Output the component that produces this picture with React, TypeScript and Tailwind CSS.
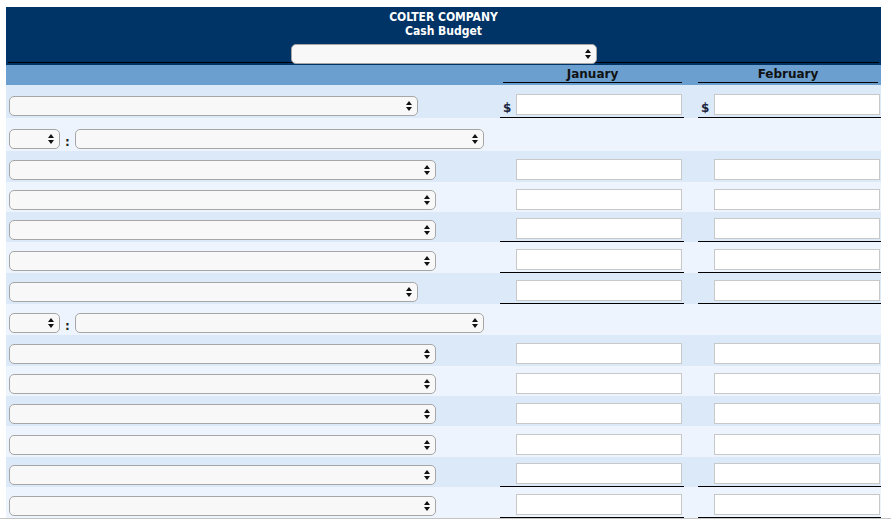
import React from 'react';

type Row = {
  h: number;
  pair?: boolean;
  w?: number;
  input?: boolean;
  dollar?: boolean;
  line?: boolean;
};

const rows: Row[] = [
  { h: 33, w: 409, input: true, dollar: true, line: true },
  { h: 33, pair: true },
  { h: 31, w: 427, input: true },
  { h: 30, w: 427, input: true },
  { h: 30, w: 427, input: true, line: true },
  { h: 31, w: 427, input: true, line: true },
  { h: 31, w: 409, input: true, line: true },
  { h: 31, pair: true },
  { h: 31, w: 427, input: true },
  { h: 30, w: 427, input: true },
  { h: 30, w: 427, input: true },
  { h: 31, w: 427, input: true },
  { h: 30, w: 427, input: true, line: true },
  { h: 31, w: 427, input: true, line: true },
];

function Arrows() {
  return (
    <svg width="6" height="10" viewBox="0 0 6 10" className="pointer-events-none absolute right-[6px] top-1/2 -translate-y-1/2">
      <path d="M0 4 L3 0 L6 4 Z" fill="#111" />
      <path d="M0 6 L3 10 L6 6 Z" fill="#111" />
    </svg>
  );
}

function Select({ width }: { width: number }) {
  return (
    <div className="relative h-[20px] shrink-0" style={{ width }}>
      <select className="block h-full w-full appearance-none rounded-[5px] border border-[#a6a6a6] bg-[#f8f8f8] text-[11px] outline-none">
        <option value=""></option>
      </select>
      <Arrows />
    </div>
  );
}

function Cell({ row, first }: { row: Row; first: boolean }) {
  return (
    <div
      className={`flex h-full items-end pb-[2px] ${row.line ? 'border-b border-black' : ''} ${first ? 'w-[184px]' : 'w-[183px]'}`}
    >
      <div className="flex w-[16px] items-end pl-[3px] text-[12px] font-bold leading-[14px] text-[#1b2540]">
        {row.dollar ? '$' : ''}
      </div>
      {row.input && (
        <input type="text" className="block h-[21px] w-[166px] border border-[#c8c8c8] bg-white outline-none" />
      )}
    </div>
  );
}

export default function App() {
  return (
    <div className="min-h-[523px] bg-white pt-[7px]" style={{ fontFamily: '"DejaVu Sans", Verdana, sans-serif' }}>
      <div className="ml-[6px] w-[875px]">
        <div className="h-[58px] bg-[#003366]">
          <div className="mx-[2px] h-[56px] border-b border-black">
            <div
              className="h-[31px] pt-[3px] text-center text-[12px] font-bold leading-[14px] text-white"
              style={{ fontFamily: '"DejaVu Sans Condensed", "DejaVu Sans", sans-serif' }}
            >
              <div>COLTER COMPANY</div>
              <div>Cash Budget</div>
            </div>
            <div className="relative z-10 mt-[6px] flex h-[20px] justify-center">
              <Select width={306} />
            </div>
          </div>
        </div>

        <div className="flex h-[20px] bg-[#6a9fcf] text-[12px] font-bold text-[#111]">
          <div className="w-[494px]" />
          <div className="ml-[3px] h-[18px] w-[179px] border-b border-black pt-[2px] text-center leading-[15px]">January</div>
          <div className="w-[16px]" />
          <div className="h-[18px] w-[180px] border-b border-black pt-[2px] text-center leading-[15px]">February</div>
        </div>

        {rows.map((row, i) => (
          <div
            key={i}
            className={`flex ${i % 2 === 0 ? 'bg-[#dce9f8]' : 'bg-[#edf4fe]'}`}
            style={{ height: row.h }}
          >
            <div className="flex w-[494px] items-end pb-[2px] pl-[3px]">
              {row.pair ? (
                <div className="flex items-end">
                  <Select width={51} />
                  <span className="mx-[5px] pb-[1px] text-[12px] font-bold leading-[12px] text-[#222]">:</span>
                  <Select width={409} />
                </div>
              ) : (
                <Select width={row.w ?? 427} />
              )}
            </div>
            <Cell row={row} first />
            <div className="w-[14px]" />
            <Cell row={row} first={false} />
          </div>
        ))}
      </div>
      <div className="border-t border-[#c4c4c4]" />
    </div>
  );
}
